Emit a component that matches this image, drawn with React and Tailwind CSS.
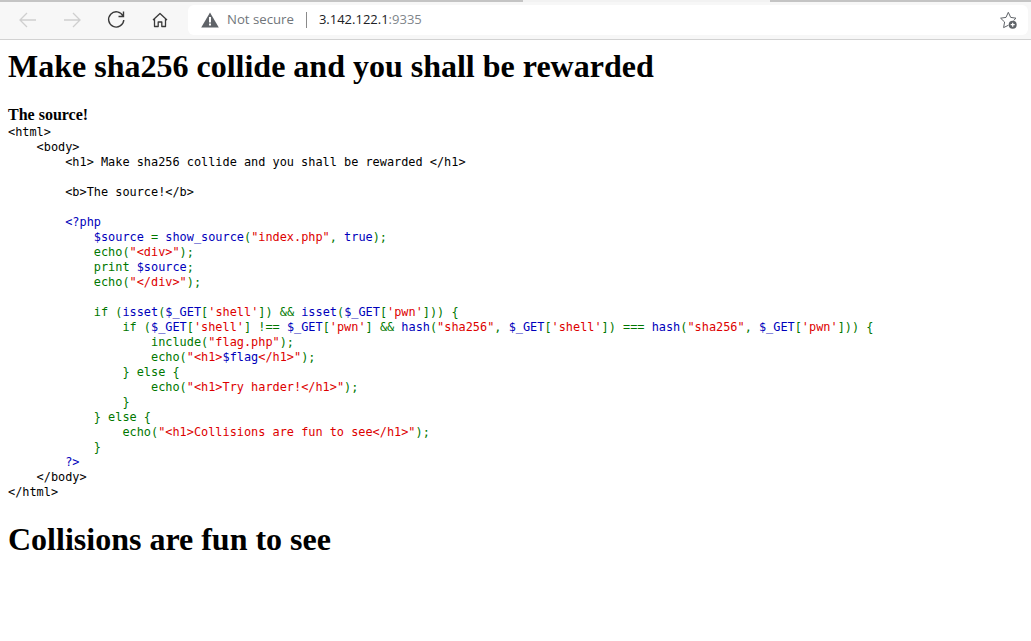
const B = ({ children }) => <span className="text-[#0000bb]">{children}</span>;
const G = ({ children }) => <span className="text-[#007700]">{children}</span>;
const R = ({ children }) => <span className="text-[#dd0000]">{children}</span>;

const Get = ({ k }) => (
  <>
    <B>$_GET</B>
    <G>[</G>
    <R>'{k}'</R>
    <G>]</G>
  </>
);

const lines = [
  <>&lt;html&gt;</>,
  <>    &lt;body&gt;</>,
  <>        &lt;h1&gt; Make sha256 collide and you shall be rewarded &lt;/h1&gt;</>,
  <> </>,
  <>        &lt;b&gt;The source!&lt;/b&gt;</>,
  <> </>,
  <>        <B>&lt;?php</B></>,
  <>            <B>$source</B> <G>=</G> <B>show_source</B><G>(</G><R>"index.php"</R><G>,</G> <B>true</B><G>);</G></>,
  <>            <G>echo(</G><R>"&lt;div&gt;"</R><G>);</G></>,
  <>            <G>print</G> <B>$source</B><G>;</G></>,
  <>            <G>echo(</G><R>"&lt;/div&gt;"</R><G>);</G></>,
  <> </>,
  <>            <G>if (</G><B>isset</B><G>(</G><Get k="shell" /><G>)</G> <G>&amp;&amp;</G> <B>isset</B><G>(</G><Get k="pwn" /><G>{")) {"}</G></>,
  <>                <G>if (</G><Get k="shell" /> <G>!==</G> <Get k="pwn" /> <G>&amp;&amp;</G> <B>hash</B><G>(</G><R>"sha256"</R><G>,</G> <Get k="shell" /><G>)</G> <G>===</G> <B>hash</B><G>(</G><R>"sha256"</R><G>,</G> <Get k="pwn" /><G>{")) {"}</G></>,
  <>                    <G>include(</G><R>"flag.php"</R><G>);</G></>,
  <>                    <G>echo(</G><R>"&lt;h1&gt;</R><B>$flag</B><R>&lt;/h1&gt;"</R><G>);</G></>,
  <>                <G>{"} else {"}</G></>,
  <>                    <G>echo(</G><R>"&lt;h1&gt;Try harder!&lt;/h1&gt;"</R><G>);</G></>,
  <>                <G>{"}"}</G></>,
  <>            <G>{"} else {"}</G></>,
  <>                <G>echo(</G><R>"&lt;h1&gt;Collisions are fun to see&lt;/h1&gt;"</R><G>);</G></>,
  <>            <G>{"}"}</G></>,
  <>        <B>?&gt;</B></>,
  <>    &lt;/body&gt;</>,
  <>&lt;/html&gt;</>,
];

const Toolbar = () => (
  <div className="relative h-10 pb-px flex items-center bg-[#f7f7f7] border-t-2 border-t-[#c4c4c4] border-b border-b-[#d2d2d2]">
    <div className="absolute left-[523px] -top-[2px] w-[247px] h-[2px] bg-[#f2f2f2]" />
    <svg width="188" height="30" viewBox="0 0 188 30" fill="none" className="shrink-0">
      <path d="M36 15H20M27 8l-7 7 7 7" stroke="#cfcfcf" strokeWidth="1.3" />
      <path d="M64 15h16M73 8l7 7-7 7" stroke="#cfcfcf" strokeWidth="1.3" />
      <path d="M123 11a7.6 7.6 0 1 0 .8 4M123.5 6.5v5h-5" stroke="#3a3a3a" strokeWidth="1.4" />
      <path d="M153 15l7-6.5 7 6.5M154.5 14v7.5h3.7v-4.5h3.6v4.5h3.7V14" stroke="#3a3a3a" strokeWidth="1.3" strokeLinejoin="round" />
    </svg>
    <div className="flex-1 h-[30px] mr-[3px] bg-white rounded-md flex items-center pl-[13px] pr-[10px] font-['Open_Sans',sans-serif]">
      <svg width="18" height="16" viewBox="0 0 18 16" className="shrink-0">
        <path d="M9 0.5L17.8 15.5H0.2Z" fill="#5f6368" />
        <rect x="8" y="5" width="2" height="5.500" fill="#fff" />
        <rect x="8" y="11.500" width="2" height="2" fill="#fff" />
      </svg>
      <span className="ml-2 text-[13.2px] text-[#70757a]">Not secure</span>
      <span className="ml-3 mr-3 w-px h-4 bg-[#8a8a8a]" />
      <span className="text-[13px] text-[#202124]">3.142.122.1</span>
      <span className="text-[13px] text-[#80868b]">:9335</span>
      <svg width="18" height="18" viewBox="0 0 18 18" fill="none" className="ml-auto">
        <path d="M8.5 14.2L3.6 16.600L4.600 11L0.600 7.200L6 6.400L8.300 1.300L10.700 6.400L16 7.200L13.500 9.600" stroke="#5f6368" strokeWidth="1" strokeLinejoin="round" />
        <circle cx="12.700" cy="13.700" r="4" fill="#5f6368" />
        <path d="M12.700 11.700v4M10.700 13.700h4" stroke="#fff" strokeWidth="1.200" />
      </svg>
    </div>
  </div>
);

export default function App() {
  return (
    <div className="h-[641px] overflow-hidden bg-white text-black">
      <Toolbar />
      <div className="px-2 pt-[8px] font-['Liberation_Serif',serif]">
        <h1 className="text-[32px] font-bold leading-[37px]">Make sha256 collide and you shall be rewarded</h1>
        <div className="mt-[21px] text-[16px] font-bold leading-[18px]">The source!</div>
        <div className="mt-px font-['DejaVu_Sans_Mono',monospace] text-[11.88px] leading-[15px] whitespace-pre">
          {lines.map((line, i) => (
            <div key={i}>{line}</div>
          ))}
        </div>
        <h1 className="mt-[21px] text-[32px] font-bold leading-[37px]">Collisions are fun to see</h1>
      </div>
    </div>
  );
}
